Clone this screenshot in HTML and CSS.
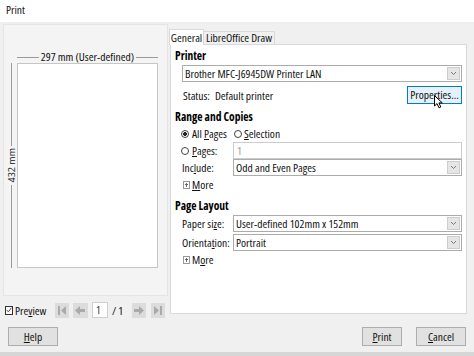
FILE: index.html
```html
<!DOCTYPE html>
<html lang="en">
<head>
    <meta charset="UTF-8">
    <title>Print</title>
    <link rel="stylesheet" href="styles.css">
</head>
<body>
    <div class="window">
        <div class="titlebar">Print</div>

        <div class="main">
            <!-- Page preview -->
            <div class="left">
                <div class="preview">
                    <div class="dim-h"><span>297 mm (User-defined)</span></div>
                    <div class="dim-v"><span>432 mm</span></div>
                    <div class="paper"></div>
                </div>
                <div class="nav">
                    <div class="check"><span class="box">
                        <svg width="7" height="8" viewBox="0 0 7 8"><path d="M0.8 4 L2.8 6.2 L6.2 1.5" fill="none" stroke="#333" stroke-width="1"/></svg>
                    </span><span>Pre<u>v</u>iew</span></div>
                    <span class="navbtn first">
                        <svg width="14" height="15" viewBox="0 0 14 15"><rect x="3" y="3" width="2" height="9" fill="#aaa"/><polygon points="11,3 6,7.5 11,12" fill="#aaa"/></svg>
                    </span>
                    <span class="navbtn">
                        <svg width="15" height="15" viewBox="0 0 15 15"><polygon points="2,7.5 7,3 7,6 12,6 12,9 7,9 7,12" fill="#aaa"/></svg>
                    </span>
                    <span class="pageno">1</span>
                    <span class="of">/ 1</span>
                    <span class="navbtn next">
                        <svg width="14" height="15" viewBox="0 0 14 15"><polygon points="12,7.5 7,3 7,6 2,6 2,9 7,9 7,12" fill="#aaa"/></svg>
                    </span>
                    <span class="navbtn last">
                        <svg width="14" height="15" viewBox="0 0 14 15"><polygon points="3,3 8,7.5 3,12" fill="#aaa"/><rect x="9" y="3" width="2" height="9" fill="#aaa"/></svg>
                    </span>
                </div>
            </div>

            <!-- Settings -->
            <div class="right">
                <div class="tabs">
                    <span class="tab active">General</span>
                    <span class="tab">LibreOffice Draw</span>
                </div>
                <div class="panel">
                    <div class="group-title">Printer</div>
                    <div class="combo printer">
                        <span class="value">Brother MFC-J6945DW Printer LAN</span>
                        <span class="drop"><svg width="7" height="5" viewBox="0 0 7 5"><path d="M1 1 L3.5 3.5 L6 1" fill="none" stroke="#777" stroke-width="1"/></svg></span>
                    </div>
                    <div class="status-row">
                        <span>Status:<span class="status-val">Default printer</span></span>
                        <span class="btn props">Properties...
                            <svg class="cursor" width="10" height="14" viewBox="0 0 10 14"><path d="M0.5 0.5 L0.5 11 L3 8.6 L5 12.8 L6.8 12 L4.9 7.9 L8.3 7.9 Z" fill="#fff" stroke="#000" stroke-width="1" stroke-linejoin="round"/></svg>
                        </span>
                    </div>

                    <div class="group-title gap">Range and Copies</div>
                    <div class="row radios">
                        <span class="radio on all"><i></i><span>All <u>P</u>ages</span></span>
                        <span class="radio sel"><i></i><span><u>S</u>election</span></span>
                    </div>
                    <div class="row radios">
                        <span class="radio pages"><i></i><span><u>P</u>ages:</span></span>
                        <span class="textbox disabled">1</span>
                    </div>
                    <div class="row">
                        <span class="label">Inc<u>l</u>ude:</span>
                        <div class="combo">
                            <span class="value">Odd and Even Pages</span>
                            <span class="drop"><svg width="7" height="5" viewBox="0 0 7 5"><path d="M1 1 L3.5 3.5 L6 1" fill="none" stroke="#777" stroke-width="1"/></svg></span>
                        </div>
                    </div>
                    <div class="row more"><span class="expander"></span><span><u>M</u>ore</span></div>

                    <div class="group-title gap">Page Layout</div>
                    <div class="row tight">
                        <span class="label">Paper si<u>z</u>e:</span>
                        <div class="combo">
                            <span class="value">User-defined 102mm x 152mm</span>
                            <span class="drop"><svg width="7" height="5" viewBox="0 0 7 5"><path d="M1 1 L3.5 3.5 L6 1" fill="none" stroke="#777" stroke-width="1"/></svg></span>
                        </div>
                    </div>
                    <div class="row spaced">
                        <span class="label">Orienta<u>t</u>ion:</span>
                        <div class="combo">
                            <span class="value">Portrait</span>
                            <span class="drop"><svg width="7" height="5" viewBox="0 0 7 5"><path d="M1 1 L3.5 3.5 L6 1" fill="none" stroke="#777" stroke-width="1"/></svg></span>
                        </div>
                    </div>
                    <div class="row more"><span class="expander"></span><span>M<u>o</u>re</span></div>
                </div>
            </div>
        </div>

        <div class="footer">
            <span class="btn help"><u>H</u>elp</span>
            <div class="actions">
                <span class="btn print"><u>P</u>rint</span>
                <span class="btn cancel"><u>C</u>ancel</span>
            </div>
        </div>
        <div class="bottom-edge"></div>
    </div>
</body>
</html>
```

FILE: styles.css
```css
* {
    margin: 0;
    padding: 0;
    box-sizing: border-box;
}

body {
    width: 474px;
    height: 356px;
    overflow: hidden;
    font-family: "Open Sans", "Noto Sans", sans-serif;
    font-stretch: condensed;
    font-size: 11.5px;
    color: #111;
    background: #f0f0f0;
}

u {
    text-decoration: underline;
    text-underline-offset: 1px;
}

.window {
    display: flex;
    flex-direction: column;
    height: 356px;
}

.titlebar {
    height: 22px;
    background: #fff;
    padding-left: 6px;
    line-height: 20px;
}

.main {
    height: 305px;
    display: flex;
}

/* left side: preview */
.left {
    width: 170px;
    display: flex;
    flex-direction: column;
}

.preview {
    margin: 2px 0 0 3px;
    width: 165px;
    height: 272px;
    background: #f4f4f4;
    border: 1px solid #e4e4e4;
    display: grid;
    grid-template-columns: 11px 141px;
    grid-template-rows: 12px 205px;
    align-content: start;
    padding: 26px 0 0 2px;
}

.dim-h {
    grid-column: 2;
    grid-row: 1;
    display: flex;
    align-items: center;
    line-height: 12px;
    font-size: 11.6px;
}

.dim-h::before,
.dim-h::after {
    content: "";
    flex: 1;
    height: 1px;
    background: #9a9a9a;
}

.dim-h span {
    padding: 0 2px;
    white-space: nowrap;
}

.dim-v {
    grid-column: 1;
    grid-row: 2;
    display: flex;
    flex-direction: column;
    align-items: center;
}

.dim-v::before,
.dim-v::after {
    content: "";
    flex: 1;
    width: 1px;
    background: #9a9a9a;
}

.dim-v span {
    writing-mode: vertical-rl;
    transform: rotate(180deg);
    font-stretch: normal;
    font-size: 9px;
    line-height: 11px;
    padding: 2px 0;
    white-space: nowrap;
}

.paper {
    grid-column: 2;
    grid-row: 2;
    background: #fff;
    border: 1px solid #c6c6c6;
}

.nav {
    margin-top: 6px;
    height: 16px;
    display: flex;
    align-items: center;
    padding-left: 5px;
}

.check {
    width: 50px;
    display: flex;
    align-items: center;
    white-space: nowrap;
}

.check .box {
    width: 8px;
    height: 9px;
    border: 1px solid #333;
    background: #fff;
    margin-right: 2px;
    display: flex;
    align-items: center;
    justify-content: center;
}

.navbtn {
    width: 14px;
    height: 15px;
    background: #dcdcdc;
    display: flex;
}

.navbtn + .navbtn {
    margin-left: 4px;
    width: 15px;
}

.navbtn.next {
    margin-left: 6px;
    width: 14px;
}

.navbtn.last {
    margin-left: 5px;
    width: 14px;
}

.pageno {
    margin-left: 4px;
    width: 16px;
    height: 16px;
    background: #fff;
    border: 1px solid #cfcfcf;
    padding-left: 3px;
    line-height: 14px;
    font-size: 11px;
    color: #333;
}

.of {
    margin-left: 4px;
    width: 14px;
    white-space: nowrap;
}

/* right side: tabs */
.right {
    width: 297px;
    padding-top: 7px;
    display: flex;
    flex-direction: column;
}

.tabs {
    display: flex;
    align-items: flex-end;
    height: 15px;
    margin-left: -1px;
    position: relative;
    z-index: 1;
}

.tab {
    height: 13px;
    line-height: 12px;
    border: 1px solid #d9d9d9;
    border-bottom: none;
    border-left: none;
    background: #f0f0f0;
    text-align: center;
    white-space: nowrap;
    width: 71px;
}

.tab.active {
    width: 35px;
    height: 16px;
    line-height: 15px;
    margin-bottom: -1px;
    background: #fff;
    border-left: 1px solid #d9d9d9;
}

.panel {
    height: 270px;
    border: 1px solid #d9d9d9;
    background: #fff;
    padding: 3px 4px 0 4px;
}

.group-title {
    font-weight: 700;
    height: 16px;
    line-height: 16px;
    color: #000;
}

.group-title.gap {
    margin-top: 5px;
}

.combo {
    flex: 1;
    display: flex;
    height: 17px;
    border: 1px solid #acacac;
    background: #fff;
}

.combo.printer {
    margin: 1px 0 0 7px;
}

.combo .value {
    flex: 1;
    padding-left: 2px;
    line-height: 15px;
    white-space: nowrap;
    overflow: hidden;
}

.combo .drop {
    width: 13px;
    margin: 1px;
    background: #e5e5e5;
    border: 1px solid #cdcdcd;
    display: flex;
    align-items: center;
    justify-content: center;
}

.status-row {
    margin-top: 4px;
    height: 18px;
    display: flex;
    align-items: center;
    justify-content: space-between;
    padding-left: 8px;
}

.status-val {
    margin-left: 5px;
}

.btn {
    height: 19px;
    border: 1px solid #adadad;
    background: #e1e1e1;
    text-align: center;
    line-height: 17px;
    white-space: nowrap;
}

.btn.props {
    position: relative;
    width: 55px;
    height: 18px;
    line-height: 16px;
    border-color: #0078d7;
    background: #e5f1fb;
}

.cursor {
    position: absolute;
    left: 26px;
    top: 8px;
}

.row {
    display: flex;
    align-items: center;
    height: 17px;
    margin-left: 7px;
}

.row.radios {
    margin-left: 6px;
}

.row.tight {
    margin-top: 1px;
}

.row.spaced {
    margin-top: 2px;
}

.label {
    width: 51px;
    white-space: nowrap;
}

.radio {
    display: flex;
    align-items: center;
    white-space: nowrap;
}

.radio i {
    width: 8px;
    height: 8px;
    border: 1px solid #444;
    border-radius: 50%;
    background: #fff;
    margin-right: 3px;
}

.radio.all {
    width: 53px;
}

.radio.sel i {
    margin-right: 2px;
}

.radio.pages {
    width: 52px;
}

.radio.on i {
    background: radial-gradient(circle, #222 0 1.6px, #fff 2.2px);
}

.textbox {
    flex: 1;
    height: 17px;
    border: 1px solid #cccccc;
    padding-left: 3px;
    line-height: 15px;
}

.textbox.disabled {
    color: #a0a0a0;
}

.row.more {
    margin-left: 8px;
}

.expander {
    width: 7px;
    height: 8px;
    margin-right: 2px;
    border: 1px solid #999;
    background:
        linear-gradient(#666, #666) center / 3px 1px no-repeat,
        linear-gradient(#666, #666) center / 1px 4px no-repeat,
        #fff;
}

/* footer */
.footer {
    height: 19px;
    display: flex;
    justify-content: space-between;
    padding: 0 8px;
}

.btn.help,
.btn.cancel {
    width: 50px;
}

.btn.print {
    width: 40px;
}

.actions {
    display: flex;
    gap: 14px;
}

.bottom-edge {
    margin-top: 6px;
    height: 4px;
    background: #d6d6d6;
}
```
